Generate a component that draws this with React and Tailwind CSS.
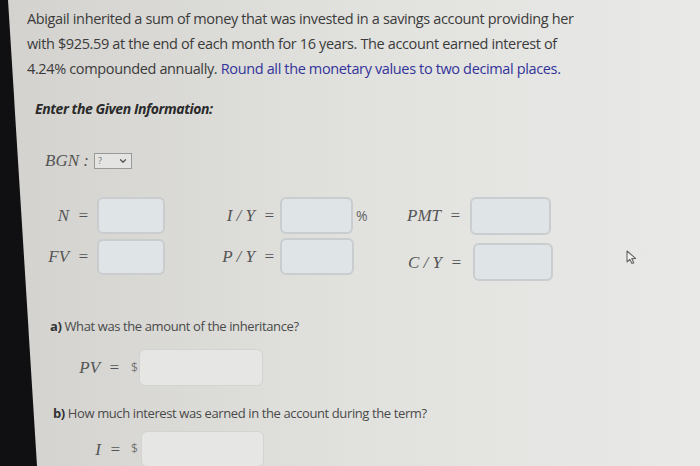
import React from "react";
import { ChevronDown } from "lucide-react";

const sans = "font-['Open_Sans',sans-serif]";
const serif = "font-['Liberation_Serif','DejaVu_Serif',serif]";

const Box = ({ className = "" }) => (
  <div
    className={`rounded-md border-2 border-[#c9cdcf] bg-[#dfe4e6] ${className}`}
  />
);

const Label = ({ children, className = "" }) => (
  <div
    className={`text-right italic text-[17px] leading-none text-[#555] ${serif} ${className}`}
  >
    {children}
  </div>
);

const Cursor = () => (
  <svg
    width="11"
    height="15"
    viewBox="0 0 11 15"
    className="absolute left-[626px] top-[250px]"
  >
    <path
      d="M1 1 L1 12 L3.8 9.4 L6 13.6 L7.8 12.8 L5.7 8.6 L9.6 8.4 Z"
      fill="#f2f2f2"
      stroke="#666"
      strokeWidth="1.1"
      strokeLinejoin="round"
    />
  </svg>
);

export default function App() {
  return (
    <div className="relative w-[700px] h-[466px] overflow-hidden bg-gradient-to-r from-[#d3d2ce] via-[#e1e1de] to-[#e9e9e7]">
      {/* dark edge of the screen photo */}
      <div className="absolute left-0 top-0 h-full w-[40px] bg-[#101012] [clip-path:polygon(0_0,8px_0,37px_100%,0_100%)]" />

      <div className={`pl-[27px] pt-[6px] ${sans}`}>
        <p className="text-[14.5px] leading-[25px] tracking-[-0.025em] text-[#3b3b3b]">
          Abigail inherited a sum of money that was invested in a savings
          account providing her
          <br />
          with $925.59 at the end of each month for 16 years. The account
          earned interest of
          <br />
          4.24% compounded annually.{" "}
          <span className="text-[#33349a]">
            Round all the monetary values to two decimal places.
          </span>
        </p>

        <div className="mt-[18px] pl-[8px] text-[14px] leading-[20px] font-bold italic tracking-[-0.03em] text-[#2a2a2a]">
          Enter the Given Information:
        </div>
      </div>

      {/* BGN */}
      <div className="mt-[33px] flex h-[18px] items-center pl-[45px]">
        <span className={`italic text-[17px] text-[#555] ${serif}`}>BGN :</span>
        <div className="ml-[5px] flex h-[16px] w-[38px] items-center justify-between border border-[#9a9a9a] bg-[#e4e4e2] px-[3px]">
          <span className={`text-[9px] text-[#777] ${sans}`}>?</span>
          <ChevronDown size={10} strokeWidth={3} className="text-[#555]" />
        </div>
      </div>

      {/* given values */}
      <div className="mt-[27px] flex flex-col gap-[4px]">
        <div className="flex h-[37px] items-center">
          <Label className="w-[89px]">N&nbsp; =</Label>
          <Box className="ml-[8px] h-[37px] w-[68px]" />
          <Label className="w-[110px]">I / Y&nbsp; =</Label>
          <Box className="ml-[5px] h-[37px] w-[73px]" />
          <span className={`ml-[3px] w-[20px] text-[14px] text-[#666] ${sans}`}>
            %
          </span>
          <Label className="w-[85px]">PMT&nbsp; =</Label>
          <Box className="ml-[9px] h-[38px] w-[81px]" />
        </div>
        <div className="flex h-[37px] items-center">
          <Label className="w-[89px]">FV&nbsp; =</Label>
          <Box className="ml-[8px] h-[36px] w-[68px]" />
          <Label className="w-[110px]">P / Y&nbsp; =</Label>
          <Box className="ml-[5px] h-[37px] w-[74px]" />
          <Label className="w-[108px] pt-[12px]">C / Y&nbsp; =</Label>
          <Box className="ml-[11px] mt-[10px] h-[38px] w-[80px]" />
        </div>
      </div>

      {/* part a */}
      <div
        className={`mt-[41px] pl-[50px] text-[13px] leading-[20px] tracking-[-0.03em] text-[#4a4a4a] ${sans}`}
      >
        <b className="text-[#333]">a)</b> What was the amount of the
        inheritance?
      </div>
      <div className="mt-[13px] flex items-center">
        <Label className="w-[120px]">PV&nbsp; =</Label>
        <span className={`ml-[11px] text-[12px] text-[#777] ${sans}`}>$</span>
        <div className="ml-[1px] h-[37px] w-[124px] rounded-md border border-[#d2d3d2] bg-[#e6e6e4]" />
      </div>

      {/* part b */}
      <div
        className={`mt-[17px] pl-[53px] text-[13px] leading-[20px] tracking-[-0.03em] text-[#4a4a4a] ${sans}`}
      >
        <b className="text-[#333]">b)</b> How much interest was earned in the
        account during the term?
      </div>
      <div className="mt-[8px] flex items-center">
        <Label className="w-[121px]">I&nbsp; =</Label>
        <span className={`ml-[10px] text-[12px] text-[#777] ${sans}`}>$</span>
        <div className="ml-[3px] h-[36px] w-[123px] rounded-md border border-[#d2d3d2] bg-[#e6e6e4]" />
      </div>

      <Cursor />
    </div>
  );
}
